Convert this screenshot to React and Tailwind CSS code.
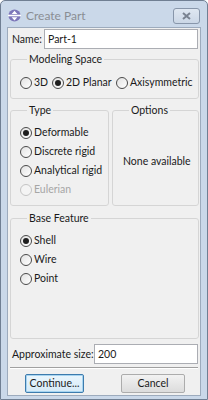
import React, { useState } from 'react';

const Radio = ({ label, checked, disabled, onClick, className = '' }) => (
  <div
    className={`flex items-center h-[15px] gap-[2px] whitespace-nowrap ${disabled ? 'text-[#a6a6a6]' : 'text-[#1a1a1a]'} ${className}`}
    onClick={disabled ? undefined : onClick}
  >
    <span
      className={`w-[12px] h-[12px] rounded-full border flex items-center justify-center shrink-0 ${
        disabled ? 'border-[#c4c4c4] bg-[#f4f4f4]' : 'border-[#4a4a4a] bg-gradient-to-br from-[#e2e2e2] to-white'
      }`}
    >
      {checked && <span className="w-[6px] h-[6px] rounded-full bg-[#1e1e1e]" />}
    </span>
    <span>{label}</span>
  </div>
);

const Group = ({ title, className, children }) => (
  <fieldset className={`border border-[#d5d5d5] rounded-[3px] pl-[9px] ${className}`}>
    <legend className="ml-[7px] px-[2px] leading-[14px] text-[#1a1a1a] whitespace-nowrap">{title}</legend>
    {children}
  </fieldset>
);

const App = () => {
  const [space, setSpace] = useState('2d');
  const [type, setType] = useState('deformable');
  const [feature, setFeature] = useState('shell');

  return (
    <div
      className="w-[208px] h-[400px] bg-[#cad8e9] border border-[#707f93] rounded-t-[5px] flex flex-col text-[10.5px] leading-[15px] overflow-hidden"
      style={{ fontFamily: 'Lato, "Liberation Sans", sans-serif' }}
    >
      {/* title bar */}
      <div className="h-[26px] flex items-start shrink-0 pl-[7px] pr-[7px]">
        <svg width="13" height="13" viewBox="0 0 16 16" className="shrink-0 mt-[8px]">
          <circle cx="8" cy="8" r="7.5" fill="#7d77b9" />
          <rect x="0" y="7" width="16" height="2" fill="#fff" />
          <path d="M8 2 L4.5 6 H11.5 Z M8 14 L4.5 10 H11.5 Z" fill="#fff" />
        </svg>
        <span className="ml-[5px] mt-[7px] text-[#8a8e94] text-[12px] leading-[16px]">Create Part</span>
        <div className="ml-auto mt-[7px] w-[27px] h-[16px] border border-[#8896aa] rounded-[3px] bg-gradient-to-b from-[#dfe7f1] to-[#cbd7e6] flex items-center justify-center">
          <svg width="9" height="8" viewBox="0 0 9 8">
            <path d="M1 1 L8 7 M8 1 L1 7" stroke="#7a8391" strokeWidth="2" />
          </svg>
        </div>
      </div>

      {/* client area */}
      <div className="flex-1 mx-[6px] mb-[3px] bg-[#f0f0f0] border border-[#9dabbd] pl-[2px] pr-[1px] pt-[1px] flex flex-col">
        <div className="flex items-center h-[20px] mr-[1px]">
          <span className="ml-[2px] w-[32px] text-[#1a1a1a]">Name:</span>
          <div className="flex-1 h-[20px] bg-white border border-[#abadb3] px-[3px] flex items-center text-[#1a1a1a]">Part-1</div>
        </div>

        <Group title="Modeling Space" className="mt-[3px] h-[47px]">
          <div className="flex mt-[9px]">
            <Radio className="w-[32px]" label="3D" checked={space === '3d'} onClick={() => setSpace('3d')} />
            <Radio className="w-[64px]" label="2D Planar" checked={space === '2d'} onClick={() => setSpace('2d')} />
            <Radio label="Axisymmetric" checked={space === 'axi'} onClick={() => setSpace('axi')} />
          </div>
        </Group>

        <div className="flex gap-[3px] mt-[4px]">
          <Group title="Type" className="w-[99px] h-[103px]">
            <div className="flex flex-col gap-[4px] mt-[8px]">
              <Radio label="Deformable" checked={type === 'deformable'} onClick={() => setType('deformable')} />
              <Radio label="Discrete rigid" checked={type === 'discrete'} onClick={() => setType('discrete')} />
              <Radio label="Analytical rigid" checked={type === 'analytical'} onClick={() => setType('analytical')} />
              <Radio label="Eulerian" disabled />
            </div>
          </Group>
          <Group title="Options" className="flex-1 h-[103px]">
            <div className="mt-[37px] ml-[1px] text-[#1a1a1a] whitespace-nowrap">None available</div>
          </Group>
        </div>

        <Group title="Base Feature" className="mt-[5px] h-[128px]">
          <div className="flex flex-col gap-[4px] mt-[8px]">
            <Radio label="Shell" checked={feature === 'shell'} onClick={() => setFeature('shell')} />
            <Radio label="Wire" checked={feature === 'wire'} onClick={() => setFeature('wire')} />
            <Radio label="Point" checked={feature === 'point'} onClick={() => setFeature('point')} />
          </div>
        </Group>

        <div className="flex items-center h-[20px] mt-[5px] mr-[1px]">
          <span className="ml-[2px] w-[82px] whitespace-nowrap text-[#1a1a1a]">Approximate size:</span>
          <div className="flex-1 h-[20px] bg-white border border-[#abadb3] px-[3px] flex items-center text-[#1a1a1a]">200</div>
        </div>

        <div className="border-t border-[#a0a0a0] border-b-white border-b mt-[3px] mr-[1px]" />

        <div className="flex mt-[5px]">
          <button className="ml-[15px] w-[59px] h-[19px] border border-[#3d7bad] bg-gradient-to-b from-[#eaf6fd] to-[#d6eaf7] rounded-[2px] text-[#1a1a1a] leading-none shadow-[inset_0_0_0_1px_#a7d4f0]">
            Continue...
          </button>
          <button className="ml-[37px] w-[64px] h-[19px] border border-[#acacac] bg-gradient-to-b from-[#f2f2f2] to-[#dcdcdc] rounded-[2px] text-[#1a1a1a] leading-none">
            Cancel
          </button>
        </div>
      </div>
    </div>
  );
};

export default App;
